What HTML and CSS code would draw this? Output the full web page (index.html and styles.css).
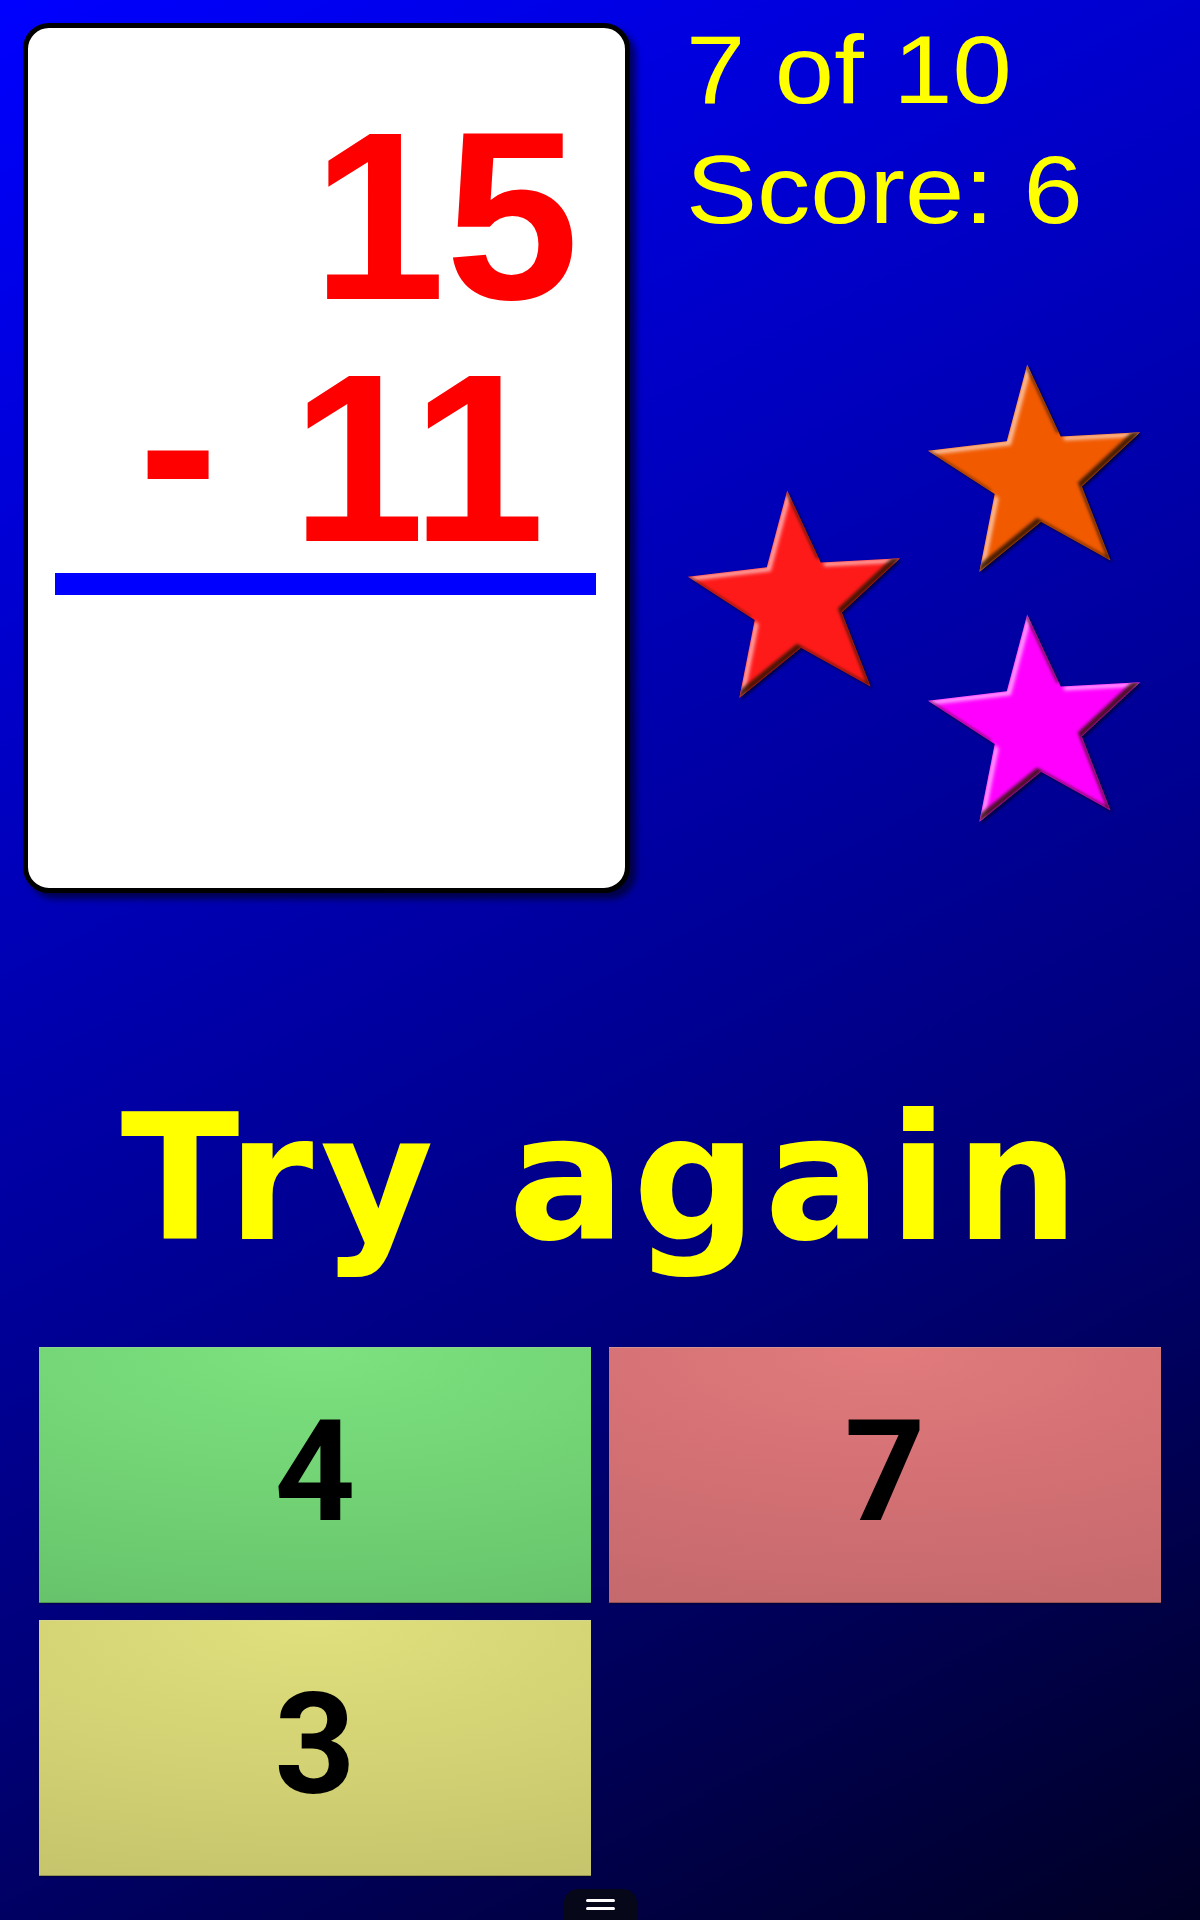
FILE: index.html
```html
<!DOCTYPE html>
<html lang="en">
<head>
<meta charset="utf-8">
<title>Flash Cards</title>
<link rel="stylesheet" href="styles.css">
</head>
<body>
<div class="app">
  <section class="top">
    <div class="card">
      <div class="problem">
        <div class="row">15</div>
        <div class="row row-sub"><span class="op">-</span>11</div>
      </div>
      <div class="rule"></div>
    </div>
    <div class="side">
      <div class="status">
        <div>7 of 10</div>
        <div>Score: 6</div>
      </div>
      <svg class="stars" width="500" height="520" viewBox="0 0 500 520">
        <defs>
          <path id="star" d="M -9.8 -111.6 L 23.7 -39.4 L 103.1 -43.8 L 44.8 10.4 L 73.5 84.5 L 4.0 45.8 L -57.7 96.0 L -42.3 18.0 L -109.1 -25.2 L -30.2 -34.7 Z"/>
          <filter id="bevel" x="-15%" y="-15%" width="130%" height="130%" color-interpolation-filters="sRGB">
            <feGaussianBlur in="SourceAlpha" stdDeviation="1.2" result="b"/>
            <feOffset in="b" dx="-4" dy="-4" result="o1"/>
            <feComposite in="SourceAlpha" in2="o1" operator="out" result="e1"/>
            <feGaussianBlur in="e1" stdDeviation="1" result="e1b"/>
            <feComposite in="e1b" in2="SourceAlpha" operator="in" result="e1c"/>
            <feFlood flood-color="#2a1400" flood-opacity="0.85"/>
            <feComposite in2="e1c" operator="in" result="dark"/>
            <feOffset in="b" dx="4" dy="4" result="o2"/>
            <feComposite in="SourceAlpha" in2="o2" operator="out" result="e2"/>
            <feGaussianBlur in="e2" stdDeviation="1.5" result="e2b"/>
            <feComposite in="e2b" in2="SourceAlpha" operator="in" result="e2c"/>
            <feFlood flood-color="#ffffff" flood-opacity="0.6"/>
            <feComposite in2="e2c" operator="in" result="light"/>
            <feOffset in="SourceAlpha" dx="2" dy="2" result="sh"/>
            <feGaussianBlur in="sh" stdDeviation="1.5" result="shb"/>
            <feFlood flood-color="#000000" flood-opacity="0.6"/>
            <feComposite in2="shb" operator="in" result="shadow"/>
            <feMerge>
              <feMergeNode in="shadow"/>
              <feMergeNode in="SourceGraphic"/>
              <feMergeNode in="light"/>
              <feMergeNode in="dark"/>
            </feMerge>
          </filter>
        </defs>
        <use href="#star" class="star star-orange" transform="translate(375 141)" filter="url(#bevel)"/>
        <use href="#star" class="star star-red" transform="translate(135 267)" filter="url(#bevel)"/>
        <use href="#star" class="star star-magenta" transform="translate(375 391)" filter="url(#bevel)"/>
      </svg>
    </div>
  </section>

  <div class="message">Try again</div>

  <section class="answers">
    <button class="answer answer-green">4</button>
    <button class="answer answer-red">7</button>
    <button class="answer answer-yellow">3</button>
  </section>

  <div class="handle">
    <span class="bar"></span>
    <span class="bar"></span>
  </div>
</div>
</body>
</html>
```

FILE: styles.css
```css
html, body {
  margin: 0;
  padding: 0;
}

body {
  width: 1200px;
  height: 1920px;
  overflow: hidden;
  background: #000030;
}

.app {
  width: 1200px;
  height: 1920px;
  overflow: hidden;
  display: flex;
  flex-direction: column;
  background: linear-gradient(152deg, #0000ff 0%, #0000b4 38%, #00007a 66%, #000024 100%);
  font-family: "Liberation Sans", Arial, sans-serif;
}

.top {
  display: flex;
  align-items: flex-start;
}

.card {
  box-sizing: border-box;
  width: 607px;
  height: 870px;
  margin: 23px 0 0 23px;
  background: #ffffff;
  border: 5px solid #000000;
  border-radius: 26px;
  box-shadow: 6px 6px 6px rgba(0, 0, 0, 0.55);
  flex-shrink: 0;
}

.problem {
  padding: 67px 46px 0 0;
  color: #ff0000;
  font-family: "Liberation Sans", Arial, sans-serif;
  font-weight: bold;
  font-size: 240px;
  line-height: 242px;
  text-align: right;
}

.row {
  white-space: nowrap;
}

.row-sub {
  padding-right: 34px;
}

.op {
  display: inline-block;
  margin-right: 73px;
  line-height: 200px;
  vertical-align: 14px;
}

.rule {
  height: 22px;
  margin: -6px 29px 0 27px;
  background: #0000ff;
}

.side {
  padding: 10px 0 0 56px;
  display: flex;
  flex-direction: column;
}

.status {
  color: #ffff00;
  font-family: "Liberation Sans", Arial, sans-serif;
  font-size: 96px;
  line-height: 120px;
  white-space: nowrap;
  transform: scaleX(1.11);
  transform-origin: left top;
}

.stars {
  display: block;
  margin: 85px 0 0 -24px;
  overflow: visible;
}

.star-red { fill: #ff1a1a; }
.star-orange { fill: #f25a00; }
.star-magenta { fill: #ff00ff; }

.message {
  margin-top: 186px;
  height: 200px;
  padding-left: 7px;
  color: #ffff00;
  font-family: "Comic Sans MS", "DejaVu Sans", sans-serif;
  font-weight: bold;
  font-size: 174px;
  line-height: 200px;
  letter-spacing: 7px;
  text-align: center;
  white-space: nowrap;
}

.answers {
  margin-top: 68px;
  padding: 0 39px;
  display: grid;
  grid-template-columns: 552px 552px;
  grid-auto-rows: 256px;
  column-gap: 18px;
  row-gap: 17px;
}

.answer {
  margin: 0;
  padding: 0 0 8px 0;
  border: none;
  border-top: 1px solid rgba(255, 255, 255, 0.25);
  border-bottom: 1px solid rgba(0, 0, 0, 0.3);
  display: flex;
  align-items: center;
  justify-content: center;
  color: #000000;
  font-family: Roboto, "Liberation Sans", sans-serif;
  font-weight: 700;
  font-size: 141px;
  line-height: 1;
  box-shadow: 0 1px 2px rgba(0, 0, 0, 0.4);
}

.answer-green {
  background: radial-gradient(130% 110% at 50% 0%, #7de27f 0%, #72d375 50%, #67c36b 100%);
}

.answer-red {
  background: radial-gradient(130% 110% at 50% 0%, #e17b7c 0%, #d37074 50%, #c4696d 100%);
}

.answer-yellow {
  background: radial-gradient(130% 110% at 50% 0%, #e0e07e 0%, #d3d274 50%, #c6c46c 100%);
}

.handle {
  box-sizing: border-box;
  width: 73px;
  height: 31px;
  margin: 13px auto 0 auto;
  padding-top: 10px;
  background: #07071a;
  border-radius: 14px 14px 0 0;
  display: flex;
  flex-direction: column;
  align-items: center;
  gap: 5px;
  flex-shrink: 0;
}

.bar {
  display: block;
  width: 29px;
  height: 3px;
  background: #ffffff;
  border-radius: 2px;
}
```
